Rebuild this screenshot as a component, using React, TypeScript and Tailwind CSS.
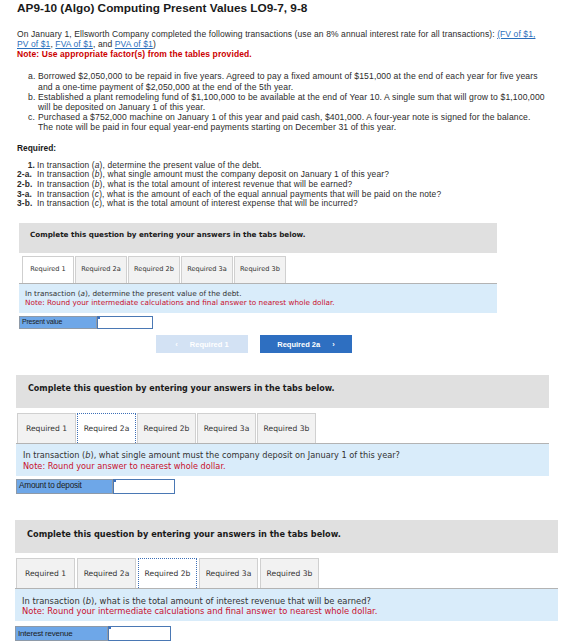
import React from "react"

// 各区块尺寸略有不同（原图是三张截图拼接）
type Variant = {
  wrap: string
  gray: string
  grayText: string
  tabs: string
  tab: string
  tabText: string
  blue: string
  row: string
  label: string
  input: string
}

const v1: Variant = {
  wrap: "ml-[19px] w-[478px]",
  gray: "h-[30px] pl-[11px] pt-[7px]",
  grayText: "text-[7.2px] leading-[10px]",
  tabs: "mt-[3px] ml-[3px] gap-[1px]",
  tab: "h-[27px] w-[52px]",
  tabText: "text-[6.6px]",
  blue: "h-[30px] pl-[6px] pt-[5px] text-[7.3px] leading-[9px]",
  row: "mt-[3px] h-[13px]",
  label: "w-[78px] text-[7px]",
  input: "w-[56px]",
}

const v2: Variant = {
  wrap: "ml-[16px] w-[533px]",
  gray: "h-[33px] pl-[12px] pt-[9px]",
  grayText: "text-[8px] leading-[10px]",
  tabs: "mt-[5px] ml-[1px] gap-[1px]",
  tab: "h-[30px] w-[59px]",
  tabText: "text-[7.6px]",
  blue: "h-[33px] pl-[7px] pt-[6px] text-[8.2px] leading-[10.5px]",
  row: "mt-[3px] h-[15px]",
  label: "w-[97px] text-[8.2px]",
  input: "w-[62px]",
}

const v3: Variant = {
  wrap: "ml-[15px] w-[543px]",
  gray: "h-[33px] pl-[12px] pt-[9px]",
  grayText: "text-[8.2px] leading-[10px]",
  tabs: "mt-[5px] ml-[1px] gap-[2px]",
  tab: "h-[30px] w-[59px]",
  tabText: "text-[7.6px]",
  blue: "h-[33px] pl-[7px] pt-[7px] text-[8.4px] leading-[10px]",
  row: "mt-[5px] h-[15px]",
  label: "w-[93px] text-[8px]",
  input: "w-[63px]",
}

const TABS = ["Required 1", "Required 2a", "Required 2b", "Required 3a", "Required 3b"]

function TabPanel({
  v,
  active,
  focused,
  line1,
  note,
  label,
}: {
  v: Variant
  active: number
  focused?: boolean
  line1: React.ReactNode
  note: string
  label: string
}) {
  return (
    <div className={v.wrap}>
      <div className={`bg-[#e0e0e0] ${v.gray}`}>
        <p className={`font-['DejaVu_Sans',Verdana,sans-serif] font-bold text-[#1a1a1a] whitespace-nowrap ${v.grayText}`}>
          Complete this question by entering your answers in the tabs below.
        </p>
      </div>
      <div className={`flex ${v.tabs}`}>
        {TABS.map((t, i) => (
          <div
            key={t}
            className={`flex items-center justify-center ${v.tab} ${
              i === active
                ? focused
                  ? "bg-white border border-dotted border-[#3d6fb6] border-b-0"
                  : "bg-white border border-[#cfcfcf] border-b-0"
                : "bg-[#f2f2f2] border border-[#d0d0d0] border-b-0"
            }`}
          >
            <span className={`font-['DejaVu_Sans',Verdana,sans-serif] text-[#333] whitespace-nowrap ${v.tabText}`}>
              {t}
            </span>
          </div>
        ))}
      </div>
      <div
        className={`bg-[#d9ecfa] border-t border-[#b3b3b3] font-['DejaVu_Sans',Verdana,sans-serif] text-[#333] ${v.blue}`}
      >
        <p className="whitespace-nowrap">{line1}</p>
        <p className="whitespace-nowrap text-[#c8102e]">{note}</p>
      </div>
      <div className={`flex ${v.row}`}>
        <div
          className={`flex items-center bg-[#6ea7e8] border border-[#8e9aa8] pl-[2px] font-['Liberation_Sans',Arial,sans-serif] text-[#1c1c1c] tracking-[-0.2px] whitespace-nowrap ${v.label}`}
        >
          {label}
        </div>
        <div className={`relative bg-white border-[1.5px] border-[#4a78b4] ${v.input}`}>
          <span className="absolute left-0 top-0 h-[2px] w-[1.5px] bg-[#3a6fc0]" />
        </div>
      </div>
    </div>
  )
}

export default function App() {
  const link = "text-[#2a6ebb] underline"
  return (
    <div className="w-[570px] h-[643px] overflow-hidden bg-white font-['Liberation_Sans',Arial,sans-serif] text-[#2b2b2b]">
      {/* 题目 */}
      <div className="pl-[17px] pt-[1px]">
        <h1 className="text-[11.8px] leading-[14px] font-bold text-[#1a1a1a] whitespace-nowrap">
          AP9-10 (Algo) Computing Present Values LO9-7, 9-8
        </h1>
        <div className="mt-[15px] text-[8.5px] leading-[9.8px] tracking-[0.1px] whitespace-nowrap">
          <p>
            On January 1, Ellsworth Company completed the following transactions (use an 8% annual interest rate for all
            transactions): <span className={link}>(FV of $1,</span>
          </p>
          <p>
            <span className={link}>PV of $1</span>, <span className={link}>FVA of $1</span>, and{" "}
            <span className={link}>PVA of $1</span>)
          </p>
          <p className="font-bold text-[#cc0000]">Note: Use appropriate factor(s) from the tables provided.</p>
        </div>
        <div className="mt-[12px] pl-[11px] text-[8.6px] leading-[10.2px] tracking-[0.12px] whitespace-nowrap">
          <div className="flex">
            <span className="w-[10px]">a.</span>
            <div>
              <p>
                Borrowed $2,050,000 to be repaid in five years. Agreed to pay a fixed amount of $151,000 at the end of
                each year for five years
              </p>
              <p>and a one-time payment of $2,050,000 at the end of the 5th year.</p>
            </div>
          </div>
          <div className="flex">
            <span className="w-[10px]">b.</span>
            <div>
              <p>
                Established a plant remodeling fund of $1,100,000 to be available at the end of Year 10. A single sum
                that will grow to $1,100,000
              </p>
              <p>will be deposited on January 1 of this year.</p>
            </div>
          </div>
          <div className="flex">
            <span className="w-[10px]">c.</span>
            <div>
              <p>
                Purchased a $752,000 machine on January 1 of this year and paid cash, $401,000. A four-year note is
                signed for the balance.
              </p>
              <p>The note will be paid in four equal year-end payments starting on December 31 of this year.</p>
            </div>
          </div>
        </div>
        <p className="mt-[10px] text-[8.4px] leading-[10px] font-bold text-[#1a1a1a]">Required:</p>
        <div className="mt-[8px] text-[8.4px] leading-[9.7px] tracking-[0.15px] whitespace-nowrap">
          <p>
            <b className="inline-block w-[20px] text-right pr-[2px]">1.</b>In transaction (<i>a</i>), determine the
            present value of the debt.
          </p>
          <p>
            <b className="inline-block w-[20px] pr-[2px]">2-a.</b>In transaction (<i>b</i>), what single amount must
            the company deposit on January 1 of this year?
          </p>
          <p>
            <b className="inline-block w-[20px] pr-[2px]">2-b.</b>In transaction (<i>b</i>), what is the total amount
            of interest revenue that will be earned?
          </p>
          <p>
            <b className="inline-block w-[20px] pr-[2px]">3-a.</b>In transaction (<i>c</i>), what is the amount of each
            of the equal annual payments that will be paid on the note?
          </p>
          <p>
            <b className="inline-block w-[20px] pr-[2px]">3-b.</b>In transaction (<i>c</i>), what is the total amount
            of interest expense that will be incurred?
          </p>
        </div>
      </div>

      {/* 第一部分 */}
      <div className="mt-[14px]">
        <TabPanel
          v={v1}
          active={0}
          line1={
            <>
              In transaction (<i>a</i>), determine the present value of the debt.
            </>
          }
          note="Note: Round your intermediate calculations and final answer to nearest whole dollar."
          label="Present value"
        />
        <div className="ml-[156px] mt-[6px] flex gap-[12px] font-['Liberation_Sans',Arial,sans-serif] text-[7.5px] font-bold text-white">
          <div className="flex h-[18px] w-[92px] items-center justify-center gap-[12px] bg-[#d3e2f4]">
            <span>‹</span>
            <span>Required 1</span>
          </div>
          <div className="flex h-[18px] w-[92px] items-center justify-center gap-[12px] bg-[#2e6fc1]">
            <span>Required 2a</span>
            <span>›</span>
          </div>
        </div>
      </div>

      {/* 第二部分 */}
      <div className="mt-[22px]">
        <TabPanel
          v={v2}
          active={1}
          focused
          line1={
            <>
              In transaction (<i>b</i>), what single amount must the company deposit on January 1 of this year?
            </>
          }
          note="Note: Round your answer to nearest whole dollar."
          label="Amount to deposit"
        />
      </div>

      {/* 第三部分 */}
      <div className="mt-[26px]">
        <TabPanel
          v={v3}
          active={2}
          focused
          line1={
            <>
              In transaction (<i>b</i>), what is the total amount of interest revenue that will be earned?
            </>
          }
          note="Note: Round your intermediate calculations and final answer to nearest whole dollar."
          label="Interest revenue"
        />
      </div>
    </div>
  )
}
